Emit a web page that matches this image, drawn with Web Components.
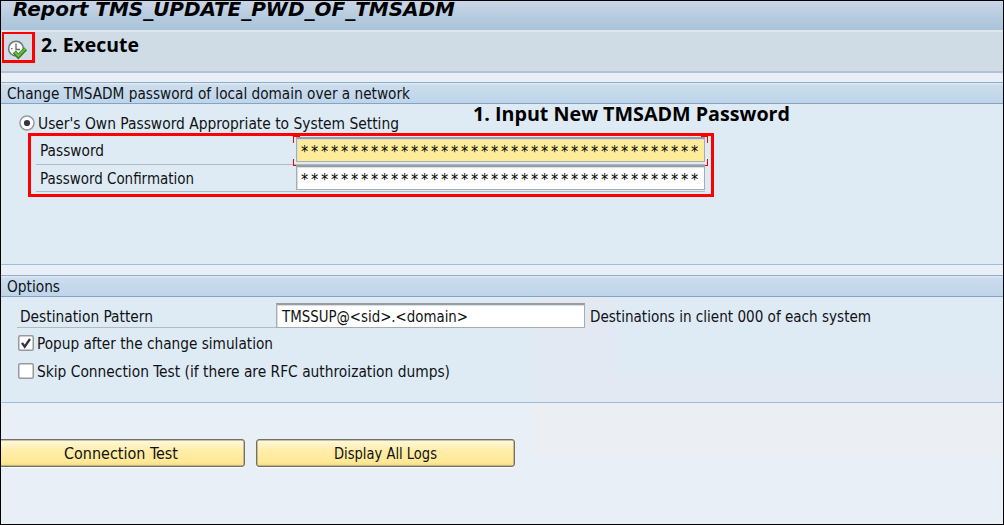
<!DOCTYPE html>
<html lang="en"><head><meta charset="utf-8"><title>Report TMS_UPDATE_PWD_OF_TMSADM</title>
<style>html,body{margin:0;height:525px;overflow:hidden}body{font-family:"DejaVu Sans Condensed","DejaVu Sans",sans-serif;font-stretch:condensed;font-size:16px;color:#101215}</style></head><body>
<sap-screen></sap-screen>
<script>
// Text on one line, scaled so that it fills the width given in "w".
class FitText extends HTMLElement{
  connectedCallback(){
    const r=this.attachShadow({mode:'open'});
    r.innerHTML='<style>:host{display:block;white-space:pre;line-height:20px;height:20px;flex:none}span{display:inline-block;transform-origin:0 50%}</style><span></span>';
    const s=r.querySelector('span');s.textContent=this.getAttribute('text');
    const w=+this.getAttribute('w');this.style.width=w+'px';
    const n=s.getBoundingClientRect().width;
    s.style.transform='scaleX('+w/n+')';
  }
}
customElements.define('fit-text',FitText);

const define=(name,html)=>customElements.define(name,class extends HTMLElement{
  constructor(){super();this.attachShadow({mode:'open'}).innerHTML=html}
});

define('sap-title',`<style>:host{display:flow-root;height:29px;box-sizing:border-box;padding-left:12px;background:linear-gradient(#cbd6e7,#b3cade 60%,#abc4da);color:#000;font-weight:bold;font-style:italic;font-size:20px}fit-text{margin-top:-2px}</style>
<fit-text w="442" text="Report TMS_UPDATE_PWD_OF_TMSADM"></fit-text>`);

define('execute-icon',`<style>:host{display:block;width:22px;height:20px}svg{display:block}</style>
<svg width="22" height="20" viewBox="0 0 22 20"><circle cx="9" cy="8.6" r="7.4" fill="#fbfcfc" stroke="#71777b" stroke-width="1.5"/><path d="M9 3.5V9.5H13M4 8.7h1.5M9 13v1.5" fill="none" stroke="#62696e" stroke-width="1.3"/><path d="M7.3 11.9l4 4.5 7.3-7.6" fill="none" stroke="#367d20" stroke-width="4.2"/><path d="M7.8 12.1l3.5 3.8 6.8-7" fill="none" stroke="#72bd46" stroke-width="2"/></svg>`);

define('sap-toolbar',`<style>:host{display:flex;box-sizing:border-box;height:43px;border-top:2px solid #dde8ef;border-bottom:2px solid #b1c3d3;background:#cfdce6}.b{box-sizing:border-box;width:33px;height:31px;border:3px solid #f00;border-width:2px 3px 3px 2px;margin:0 0 0 1px;padding:6px 0 0 3px}fit-text{color:#000;font:bold 19.5px/20px "Open Sans","Noto Sans",sans-serif;margin:3px 0 0 6px}</style>
<div class="b"><execute-icon></execute-icon></div><fit-text w="98" text="2. Execute"></fit-text>`);

define('sap-group',`<style>:host{display:block;box-sizing:border-box;border-bottom:1px solid #9fbcd9;background:#deeaf4}
header{box-sizing:border-box;height:22px;border-top:1px solid #8faccb;border-bottom:1px solid #86a3c4;background:linear-gradient(#e4edf6,#cbdced 12%,#bed5ea);padding:1px 0 0 6px}</style><header><slot name="title"></slot></header><slot></slot>`);

define('sap-field',`<style>:host{display:block;box-sizing:border-box;height:25px;border:1px solid #a7acb1;border-top:2px solid #989da3;background:var(--fill,#fff);box-shadow:inset 1px 1px 1px #d9dcdf;padding:1px 0 0 4px}</style><slot></slot>`);

define('star-line',`<style>:host{display:grid;grid-template-columns:repeat(40,10px);height:18px;color:#000;font:16px/20px "DejaVu Sans Condensed","DejaVu Sans",sans-serif;text-align:left;padding-top:2px}</style>`+'<span>*</span>'.repeat(40));

define('password-form',`<style>:host{display:block;box-sizing:border-box;width:686px;height:64px;border:3px solid #f00;margin-left:27px;padding:1px 0 0 5px}
.r{position:relative;box-sizing:border-box;display:flex;height:27.5px;border-bottom:1px solid #b2bac1;width:669px}fit-text{margin:4px 0 0 4px}sap-field{width:409px;margin-left:auto}.y{--fill:#ffec9b}
i{position:absolute;width:6px;height:6px;border:0 solid #f00000;right:-3px}.a,.b{right:auto;left:257px}.a,.c{top:-1px;border-top-width:1px}.b,.d{top:22px;border-bottom-width:1px}.a,.b{border-left-width:1px}.c,.d{border-right-width:1px}</style>
<div class="r"><fit-text w="64" text="Password"></fit-text><sap-field class="y"><star-line></star-line></sap-field><i class="a"></i><i class="b"></i><i class="c"></i><i class="d"></i></div>
<div class="r"><fit-text w="154" text="Password Confirmation"></fit-text><sap-field><star-line></star-line></sap-field></div>`);

define('sap-radio',`<style>:host{display:block;width:16px;height:16px}svg{display:block}</style><svg width="16" height="16"><circle cx="8" cy="8" r="7" fill="#fff" stroke="#96999d" stroke-width="1.5"/><circle cx="8" cy="8" r="3.1" fill="#343444"/></svg>`);

customElements.define('sap-check',class extends HTMLElement{
  connectedCallback(){this.attachShadow({mode:'open'}).innerHTML=`<style>:host{display:block;width:16px;height:16px}svg{display:block}</style><svg width="16" height="16"><rect x=".75" y=".75" width="14.5" height="14.5" rx="1.5" fill="#fff" stroke="#96999d" stroke-width="1.5"/>${this.hasAttribute('checked')?'<path d="M4 7.8l2.7 3.9L12 4" fill="none" stroke="#343444" stroke-width="2.3"/>':''}</svg>`}
});

define('sap-button',`<style>:host{display:block;box-sizing:border-box;height:28px;border:1px solid #747064;border-radius:3px;background:linear-gradient(#fff9df,#ffedaa 40%,#ffe996 85%,#f5dc87);box-shadow:inset 0 0 0 .5px #8c866f,0 1px 1px #fafcff;padding-top:4px}</style><slot></slot>`);

define('sap-screen',`<style>:host{display:block;box-sizing:border-box;width:1004px;height:525px;border:1px solid #000;background:linear-gradient(#ebeff3,#ebeff3) 532px 402px/470px 53px no-repeat,#e9eff7;overflow:hidden}
.one{height:183px;margin-top:9px}.two{height:128px;margin-top:10px;background:linear-gradient(#e2e9f3,#e2e9f3) 535px 22px/79px 79px no-repeat,linear-gradient(#e2e9f3,#e2e9f3) 535px 101px/468px 27px no-repeat,#deeaf4}
.radio{display:flex;padding:11px 0 0 18px;height:18px}.radio fit-text{margin:-1px 0 0 3px}.radio .note{color:#000;font:bold 19.5px/20px "Open Sans","Noto Sans",sans-serif;margin:-11px 0 0 74px}
.dest{display:flex;box-sizing:border-box;height:31px;padding:6px 0 0 16px}.dest>div{display:flex;box-sizing:border-box;width:259px;height:25px;border-bottom:1px solid #b2bac1;padding:4px 0 0 3px}.dest sap-field{width:309px}.dest>fit-text{margin:4px 0 0 5px}.dest sap-field fit-text{margin:1px 0 0 1px}
.c{display:flex;height:28px;padding:7px 0 0 17px;box-sizing:border-box}.c fit-text{margin:-1px 0 0 3px}
.buttons{display:flex;gap:11px;margin:36px 0 0 -5px}.buttons>:nth-child(1){width:249px}.buttons>:nth-child(2){width:259px}.buttons fit-text{margin:0 auto}</style>
<sap-title></sap-title><sap-toolbar></sap-toolbar>
<sap-group class="one"><fit-text slot="title" w="403" text="Change TMSADM password of local domain over a network"></fit-text>
<div class="radio"><sap-radio></sap-radio><fit-text w="361" text="User's Own Password Appropriate to System Setting"></fit-text><fit-text class="note" w="317" text="1. Input New TMSADM Password"></fit-text></div><password-form></password-form></sap-group>
<sap-group class="two"><fit-text slot="title" w="53" text="Options"></fit-text>
<div class="dest"><div><fit-text w="133" text="Destination Pattern"></fit-text></div><sap-field><fit-text w="186" text="TMSSUP@&lt;sid&gt;.&lt;domain&gt;"></fit-text></sap-field><fit-text w="281" text="Destinations in client 000 of each system"></fit-text></div>
<div class="c"><sap-check checked></sap-check><fit-text w="236" text="Popup after the change simulation"></fit-text></div>
<div class="c"><sap-check></sap-check><fit-text w="413" text="Skip Connection Test (if there are RFC authroization dumps)"></fit-text></div></sap-group>
<div class="buttons"><sap-button><fit-text w="114" text="Connection Test"></fit-text></sap-button><sap-button><fit-text w="103" text="Display All Logs"></fit-text></sap-button></div>`);
</script></body></html>
